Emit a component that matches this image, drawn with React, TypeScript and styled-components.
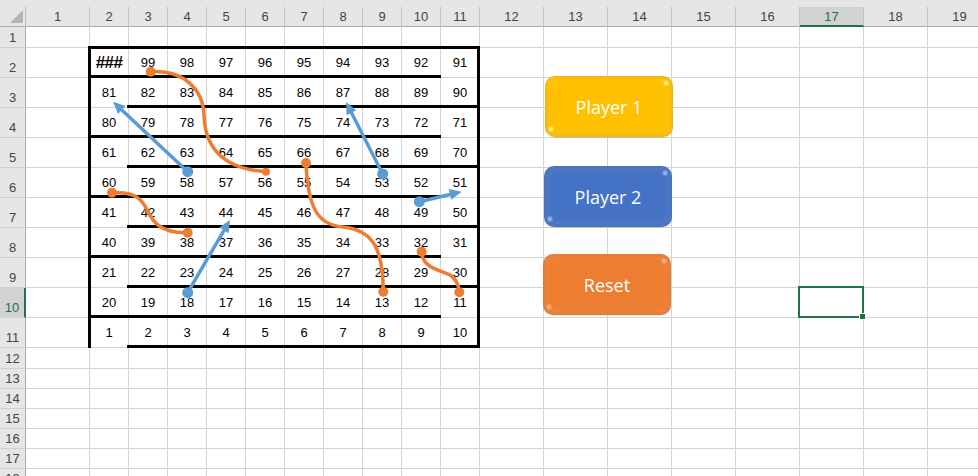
import React from 'react';
import styled, { createGlobalStyle } from 'styled-components';

const GRID_LINE = '#d4d4d4';
const HEADER_BG = '#e6e6e6';
const HEADER_SEL = '#d2d2d2';
const EXCEL_GREEN = '#217346';
const ORANGE = '#ed7d31';
const BLUE = '#5b9bd5';

const COL_WIDTHS = [64, ...Array(10).fill(39), ...Array(8).fill(64)];
const ROW_HEIGHTS = [21, ...Array(10).fill(30), 21, ...Array(6).fill(20)];

const SELECTED_COL = 17;
const SELECTED_ROW = 10;

const GlobalStyle = createGlobalStyle`
  html, body {
    margin: 0;
    padding: 0;
    background: #ffffff;
    overflow: hidden;
  }
  body {
    font-family: 'Liberation Sans', Arial, sans-serif;
  }
`;

const Sheet = styled.div`
  position: relative;
  width: 978px;
  height: 476px;
  overflow: hidden;
  background: #ffffff;
`;

const Grid = styled.div`
  display: grid;
  width: max-content;
  grid-template-columns: 26px ${COL_WIDTHS.map(w => `${w}px`).join(' ')};
  grid-template-rows: 27px ${ROW_HEIGHTS.map(h => `${h}px`).join(' ')};
`;

const Corner = styled.div`
  display: flex;
  align-items: flex-end;
  background: ${HEADER_BG};
`;

const CornerBox = styled.div`
  box-sizing: border-box;
  width: 100%;
  height: 20px;
  display: flex;
  justify-content: flex-end;
  align-items: flex-end;
  padding: 0 2px 3px 0;
  border-right: 1px solid #bdbdbd;
  border-bottom: 1px solid #ababab;
`;

const CornerTriangle = styled.div`
  width: 13px;
  height: 13px;
  background: #b4b4b4;
  clip-path: polygon(100% 0, 100% 100%, 0 100%);
`;

const ColHeader = styled.div`
  display: flex;
  align-items: flex-end;
  background: ${HEADER_BG};
`;

const ColLabel = styled.div<{ $selected?: boolean }>`
  box-sizing: border-box;
  width: 100%;
  height: 20px;
  display: flex;
  align-items: center;
  justify-content: center;
  font-size: 13px;
  color: ${p => (p.$selected ? EXCEL_GREEN : '#444444')};
  background: ${p => (p.$selected ? HEADER_SEL : HEADER_BG)};
  border-right: 1px solid #c3c3c3;
  border-bottom: ${p => (p.$selected ? `2px solid ${EXCEL_GREEN}` : '1px solid #ababab')};
`;

const RowHeader = styled.div<{ $selected?: boolean }>`
  box-sizing: border-box;
  display: flex;
  align-items: flex-end;
  justify-content: center;
  padding-bottom: 2px;
  font-size: 13px;
  line-height: 15px;
  color: ${p => (p.$selected ? EXCEL_GREEN : '#444444')};
  background: ${p => (p.$selected ? HEADER_SEL : HEADER_BG)};
  border-right: ${p => (p.$selected ? `2px solid ${EXCEL_GREEN}` : '1px solid #ababab')};
  border-bottom: 1px solid #d0d0d0;
`;

type Edges = { $top?: boolean; $bottom?: boolean; $left?: boolean; $right?: boolean };

const Cell = styled.div<Edges & { $bold?: boolean }>`
  position: relative;
  box-sizing: border-box;
  display: flex;
  align-items: center;
  justify-content: center;
  font-size: ${p => (p.$bold ? '17px' : '13px')};
  font-weight: ${p => (p.$bold ? 700 : 400)};
  letter-spacing: ${p => (p.$bold ? '-0.6px' : '0')};
  color: #000000;
  border-right: 1px solid ${GRID_LINE};
  border-bottom: 1px solid ${GRID_LINE};

  &::before {
    content: '';
    display: ${p => (p.$top || p.$bottom || p.$left || p.$right ? 'block' : 'none')};
    position: absolute;
    left: -2px;
    right: -1px;
    top: -2px;
    bottom: -1px;
    z-index: 1;
    pointer-events: none;
    border-top: ${p => (p.$top ? '3px solid #000' : '0')};
    border-bottom: ${p => (p.$bottom ? '3px solid #000' : '0')};
    border-left: ${p => (p.$left ? '3px solid #000' : '0')};
    border-right: ${p => (p.$right ? '3px solid #000' : '0')};
  }
`;

const SelectionFrame = styled.div`
  position: absolute;
  left: -2px;
  top: -2px;
  right: -1px;
  bottom: -1px;
  border: 2px solid ${EXCEL_GREEN};
  z-index: 2;

  &::after {
    content: '';
    position: absolute;
    right: -4px;
    bottom: -4px;
    width: 5px;
    height: 5px;
    background: ${EXCEL_GREEN};
    border: 1px solid #ffffff;
  }
`;

const Overlay = styled.svg`
  position: absolute;
  left: 0;
  top: 0;
  z-index: 3;
  pointer-events: none;
`;

const ShapeButton = styled.button<{ $x: number; $y: number; $color: string; $glow: string }>`
  position: absolute;
  left: ${p => p.$x}px;
  top: ${p => p.$y}px;
  z-index: 4;
  width: 128px;
  height: 61px;
  border: none;
  border-radius: 10px;
  font-family: 'Open Sans', 'Liberation Sans', sans-serif;
  font-size: 18px;
  color: #ffffff;
  cursor: pointer;
  background:
    radial-gradient(circle at 121px 7px, ${p => p.$glow} 0 1px, transparent 3.5px),
    radial-gradient(circle at 6px 53px, ${p => p.$glow} 0 1px, transparent 3.5px),
    ${p => p.$color};
  box-shadow:
    inset 0 0 3px 2px rgba(0, 0, 0, 0.07),
    inset 0 0 10px 3px rgba(255, 255, 255, 0.1),
    0 1px 1px rgba(0, 0, 0, 0.1);
`;

const boardValue = (row: number, col: number): string => {
  const k = 11 - row;
  const i = col - 2;
  const n = k % 2 === 0 ? k * 10 + i + 1 : k * 10 + 10 - i;
  return n === 100 ? '###' : String(n);
};

const boardEdges = (row: number, col: number): Edges => {
  const inBoard = row >= 2 && row <= 11 && col >= 2 && col <= 11;
  if (!inBoard) return {};
  // snake-shaped board: every row boundary leaves a gap on alternating sides
  const gapRight = row % 2 === 0 && row !== 11;
  const bottom = gapRight ? col <= 10 : col >= 3;
  return {
    $top: row === 2,
    $bottom: bottom,
    $left: col === 2,
    $right: col === 11,
  };
};

type Pt = [number, number];

const Ladder: React.FC<{ from: Pt; to: Pt }> = ({ from, to }) => {
  const [x1, y1] = from;
  const [x2, y2] = to;
  const len = Math.hypot(x2 - x1, y2 - y1);
  const ux = (x2 - x1) / len;
  const uy = (y2 - y1) / len;
  const head = 12;
  const half = 5.5;
  const bx = x2 - ux * head;
  const by = y2 - uy * head;
  const px = -uy;
  const py = ux;
  const points = `${x2},${y2} ${bx + px * half},${by + py * half} ${bx - px * half},${by - py * half}`;
  return (
    <g>
      <line x1={x1} y1={y1} x2={bx + ux} y2={by + uy} stroke={BLUE} strokeWidth={3.5} />
      <polygon points={points} fill={BLUE} />
      <circle cx={x1} cy={y1} r={5.5} fill={BLUE} />
    </g>
  );
};

const Snake: React.FC<{ d: string; head: Pt; tail: Pt; tailR?: number }> = ({ d, head, tail, tailR = 5 }) => (
  <g>
    <path d={d} fill="none" stroke={ORANGE} strokeWidth={3.5} strokeLinecap="round" />
    <circle cx={head[0]} cy={head[1]} r={5} fill={ORANGE} />
    <circle cx={tail[0]} cy={tail[1]} r={tailR} fill={ORANGE} />
  </g>
);

const App: React.FC = () => {
  const cols = COL_WIDTHS.map((_, i) => i + 1);
  const rows = ROW_HEIGHTS.map((_, i) => i + 1);

  return (
    <Sheet>
      <GlobalStyle />
      <Grid>
        <Corner>
          <CornerBox>
            <CornerTriangle />
          </CornerBox>
        </Corner>
        {cols.map(c => (
          <ColHeader key={`h${c}`}>
            <ColLabel $selected={c === SELECTED_COL}>{c}</ColLabel>
          </ColHeader>
        ))}
        {rows.map(r => (
          <React.Fragment key={`r${r}`}>
            <RowHeader $selected={r === SELECTED_ROW}>{r}</RowHeader>
            {cols.map(c => {
              const inBoard = r >= 2 && r <= 11 && c >= 2 && c <= 11;
              const value = inBoard ? boardValue(r, c) : '';
              return (
                <Cell key={`c${r}-${c}`} {...boardEdges(r, c)} $bold={value === '###'}>
                  {value}
                  {r === SELECTED_ROW && c === SELECTED_COL && <SelectionFrame />}
                </Cell>
              );
            })}
          </React.Fragment>
        ))}
      </Grid>

      <Overlay width={978} height={476} viewBox="0 0 978 476">
        <Snake d="M150.7 71.7 C185 70 203 90 204 115 C205 150 225 169 266 171.7" head={[150.7, 71.7]} tail={[266, 171.7]} tailR={4} />
        <Snake d="M306 163 C308 205 316 225 343 227 C375 230 383 252 383.3 291.7" head={[306, 163]} tail={[383.3, 291.7]} />
        <Snake d="M112 193 C150 190 143 214 158 225 C167 232 177 233 187.7 232.7" head={[112, 192.7]} tail={[187.7, 232.7]} />
        <Snake d="M421.7 251.7 C422 268 440 270 450 275 C458 280 459 288 459.3 292.3" head={[421.7, 251.7]} tail={[459.3, 292.3]} />

        <Ladder from={[187.7, 171.7]} to={[113, 101.7]} />
        <Ladder from={[382.7, 174]} to={[346, 102]} />
        <Ladder from={[419.3, 201.7]} to={[461.7, 191.7]} />
        <Ladder from={[187.7, 292.7]} to={[230, 220]} />
      </Overlay>

      <ShapeButton $x={545} $y={76} $color="#ffc000" $glow="#fff27a">Player 1</ShapeButton>
      <ShapeButton $x={544} $y={166} $color="#4472c4" $glow="#8fb4ea">Player 2</ShapeButton>
      <ShapeButton $x={543} $y={254} $color="#ed7d31" $glow="#f6b184">Reset</ShapeButton>
    </Sheet>
  );
};

export default App;
